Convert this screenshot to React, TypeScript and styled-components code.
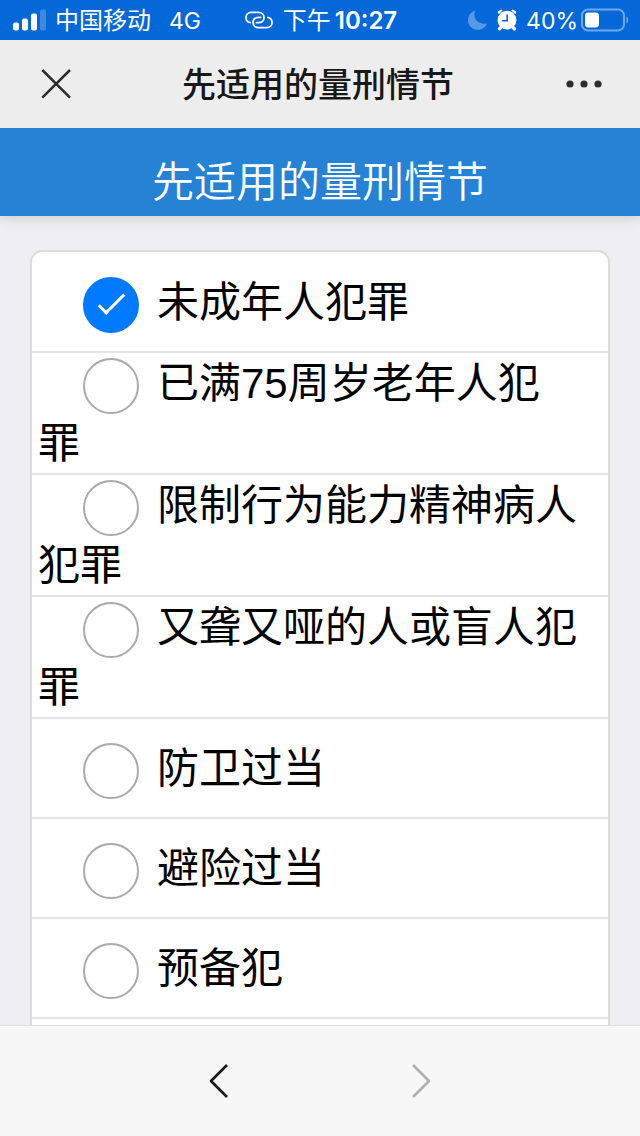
import React, { useState } from "react";
import styled, { createGlobalStyle } from "styled-components";

const GlobalStyle = createGlobalStyle`
  *, *::before, *::after { box-sizing: border-box; }
  body {
    margin: 0;
    background: #efeef4;
    font-family: "Liberation Sans", "Noto Sans CJK SC", sans-serif;
    color: #000;
  }
`;

const Screen = styled.div`
  display: flex;
  flex-direction: column;
  height: 100vh;
`;

const StatusBar = styled.div`
  flex: none;
  display: grid;
  grid-template-columns: 1fr auto 1fr;
  align-items: center;
  height: 40px;
  padding: 1px 11px 0 13px;
  background: #0568d8;
  color: #fff;
  font-family: Inter, "Noto Sans CJK SC", sans-serif;
  font-size: 24px;
  line-height: 40px;
  white-space: nowrap;
`;

const StatusGroup = styled.div<{ $align?: string; $gap: number }>`
  display: flex;
  align-items: center;
  justify-content: ${(p) => p.$align ?? "flex-start"};
  gap: ${(p) => p.$gap}px;

  svg {
    flex: none;
    display: block;
    margin-bottom: 2px;
  }
`;

const Network = styled.span`
  margin-left: 10px;
  font-size: 23px;
`;

const Clock = styled.span`
  display: flex;
  gap: 4px;

  b {
    font-weight: 600;
  }
`;

const BatteryStatus = styled.span`
  display: flex;
  align-items: center;
  gap: 3px;
  font-size: 23px;
`;

const NavBar = styled.header`
  position: relative;
  z-index: 2;
  flex: none;
  display: grid;
  grid-template-columns: 60px 1fr 60px;
  align-items: center;
  height: 88px;
  padding: 0 26px;
  background: #ededed;
  color: #181818;
`;

const NavTitle = styled.h2`
  margin: 0;
  padding: 2px 4px 0 0;
  font-size: 34px;
  line-height: 48px;
  font-weight: 500;
  text-align: center;
`;

const IconButton = styled.button`
  display: flex;
  align-items: center;
  justify-content: center;
  width: 60px;
  height: 60px;
  padding: 0;
  border: 0;
  background: none;
  color: #2c2c2c;

  &:disabled {
    color: #b0b0b0;
  }
`;

const PageHeader = styled.div`
  flex: none;
  z-index: 1;
  height: 88px;
  padding-top: 25px;
  background: #2682d5;
  box-shadow: 0 2px 12px #ccc;
  color: #fff;
`;

const PageTitle = styled.h1`
  margin: 0;
  font-size: 42px;
  line-height: 60px;
  font-weight: 350;
  text-align: center;
`;

const Content = styled.main`
  flex: 1;
  min-height: 0;
  display: flex;
  flex-direction: column;
  padding: 34px 30px 0;
  overflow-y: auto;
  scrollbar-width: none;
`;

const Card = styled.form`
  flex: 1 0 auto;
  padding-top: 1px;
  border: 2px solid #dcdcde;
  border-bottom: 0;
  border-radius: 12px 12px 0 0;
  background: #fff;
`;

const Row = styled.div`
  display: flex;
  align-items: center;
  min-height: 100px;
  padding: 0 28px 0 6px;
  border-bottom: 2px solid #e5e5e5;
`;

const Option = styled.label`
  flex: 1;
  padding-top: 1px;
  margin-bottom: -1px;
  font-size: 42px;
  line-height: 60px;
`;

const Radio = styled.input`
  appearance: none;
  display: inline-grid;
  place-items: center;
  width: 56px;
  height: 56px;
  margin: 4px 18px 0 45px;
  border: 2px solid #aaa;
  border-radius: 50%;
  vertical-align: top;

  &:checked {
    border-color: #007aff;
    background: #007aff;
  }

  &:checked::after {
    content: "";
    width: 27px;
    height: 12px;
    margin-bottom: 8px;
    border: solid #fff;
    border-width: 0 0 3px 3px;
    transform: rotate(-45deg);
  }
`;

const Toolbar = styled.nav`
  flex: none;
  z-index: 1;
  display: flex;
  align-items: center;
  justify-content: center;
  gap: 142px;
  height: 111px;
  border-top: 1px solid #dedede;
  background: #f7f7f7;
`;

const SignalIcon = () => (
  <svg width="34" height="24" viewBox="0 0 34 24" fill="#fff" aria-hidden="true">
    <rect x="0" y="14.5" width="6" height="8" rx="2" />
    <rect x="9" y="10.5" width="6" height="12" rx="2" />
    <rect x="18" y="5.5" width="6" height="17" rx="2" />
    <rect x="27" y="1.5" width="6" height="21" rx="2" opacity="0.22" />
  </svg>
);

const LinkIcon = () => (
  <svg width="28" height="18" viewBox="0 0 28 18" fill="none" stroke="#fff" strokeWidth="1.8" strokeLinecap="round" aria-hidden="true">
    <path d="M5.2 11.7 C2.6 11.3 1 9.2 1 6.6 C1 3.6 3.2 1.4 6.2 1.4 H13.4 C16.8 1.4 19 3.6 19 6.5 C19 9.6 16.8 11.7 13.6 11.7 H11.4" />
    <path d="M22.8 6.3 C25.4 6.7 27 8.8 27 11.4 C27 14.4 24.8 16.6 21.8 16.6 H13.6 C10.2 16.6 8 14.4 8 11.5 C8 8.4 10.2 6.3 13.4 6.3 H15.6" />
  </svg>
);

const MoonIcon = () => (
  <svg width="20" height="20" viewBox="0 0 20 20" fill="#5798e5" aria-hidden="true">
    <path d="M7.4 0.5 C2.8 2 0 6 0 10.2 C0 15.6 4.3 19.8 9.8 19.8 C14.3 19.8 17.8 17 19 13.4 C12.9 14.9 7 11.2 6.4 5.8 C6.2 3.8 6.6 2 7.4 0.5 Z" />
  </svg>
);

const AlarmIcon = () => (
  <svg width="20" height="22" viewBox="0 0 20 22" aria-hidden="true">
    <path d="M2.6 3.4 L4 2.4 M17.4 3.4 L16 2.4 M4 18.4 L2.6 19.8 M16 18.4 L17.4 19.8" stroke="#fff" strokeLinecap="round" strokeWidth="3.4" />
    <circle cx="10" cy="11.2" r="9.4" fill="#fff" />
    <path d="M1.6 6.2 C2.6 4.4 4 3 6 2.2 M18.4 6.2 C17.4 4.4 16 3 14 2.2" fill="none" stroke="#0568d8" strokeWidth="0.8" />
    <path d="M10.2 6 V11.7 H5.6" fill="none" stroke="#0568d8" strokeWidth="1.6" strokeLinecap="round" />
  </svg>
);

const BatteryIcon = () => (
  <svg width="48" height="24" viewBox="0 0 48 24" aria-hidden="true">
    <rect x="1" y="1.5" width="42" height="21" rx="6" fill="none" stroke="#6fa7e9" strokeWidth="2" />
    <rect x="4" y="4.5" width="14" height="15" rx="3.4" fill="#fff" />
    <path d="M45.4 8.5 C47.8 9.5 47.8 14.5 45.4 15.5 Z" fill="#6fa7e9" />
  </svg>
);

const CloseIcon = () => (
  <svg width="32" height="32" viewBox="0 0 32 32" fill="none" stroke="currentColor" strokeWidth="2.5" aria-hidden="true">
    <path d="M2.3 2 L30 29.7 M30 2 L2.3 29.7" />
  </svg>
);

const MoreIcon = () => (
  <svg width="36" height="8" viewBox="0 0 36 8" fill="currentColor" aria-hidden="true">
    <circle cx="4" cy="4" r="3.6" />
    <circle cx="18" cy="4" r="3.6" />
    <circle cx="32" cy="4" r="3.6" />
  </svg>
);

const Chevron = ({ d }: { d: string }) => (
  <svg width="20" height="36" viewBox="0 0 20 36" fill="none" stroke="currentColor" strokeWidth="2.6" strokeLinejoin="round" aria-hidden="true">
    <path d={d} />
  </svg>
);

const BackButton = styled(IconButton)`
  color: #181818;
`;

const options = [
  "未成年人犯罪",
  "已满75周岁老年人犯罪",
  "限制行为能力精神病人犯罪",
  "又聋又哑的人或盲人犯罪",
  "防卫过当",
  "避险过当",
  "预备犯",
];

export default function App() {
  const [selected, setSelected] = useState(0);

  return (
    <Screen>
      <GlobalStyle />
      <StatusBar>
        <StatusGroup $gap={8}>
          <SignalIcon />
          <span>中国移动</span>
          <Network>4G</Network>
        </StatusGroup>
        <StatusGroup $gap={10}>
          <LinkIcon />
          <Clock>
            下午<b>10:27</b>
          </Clock>
        </StatusGroup>
        <StatusGroup $gap={9} $align="flex-end">
          <MoonIcon />
          <AlarmIcon />
          <BatteryStatus>
            40%
            <BatteryIcon />
          </BatteryStatus>
        </StatusGroup>
      </StatusBar>
      <NavBar>
        <IconButton type="button" aria-label="关闭">
          <CloseIcon />
        </IconButton>
        <NavTitle>先适用的量刑情节</NavTitle>
        <IconButton type="button" aria-label="更多">
          <MoreIcon />
        </IconButton>
      </NavBar>
      <PageHeader>
        <PageTitle>先适用的量刑情节</PageTitle>
      </PageHeader>
      <Content>
        <Card>
          {options.map((text, i) => (
            <Row key={text}>
              <Option>
                <Radio
                  type="radio"
                  name="circumstance"
                  checked={selected === i}
                  onChange={() => setSelected(i)}
                />
                {text}
              </Option>
            </Row>
          ))}
        </Card>
      </Content>
      <Toolbar>
        <BackButton type="button" aria-label="后退">
          <Chevron d="M18 2 L2 18 L18 34" />
        </BackButton>
        <IconButton type="button" aria-label="前进" disabled>
          <Chevron d="M2 2 L18 18 L2 34" />
        </IconButton>
      </Toolbar>
    </Screen>
  );
}
